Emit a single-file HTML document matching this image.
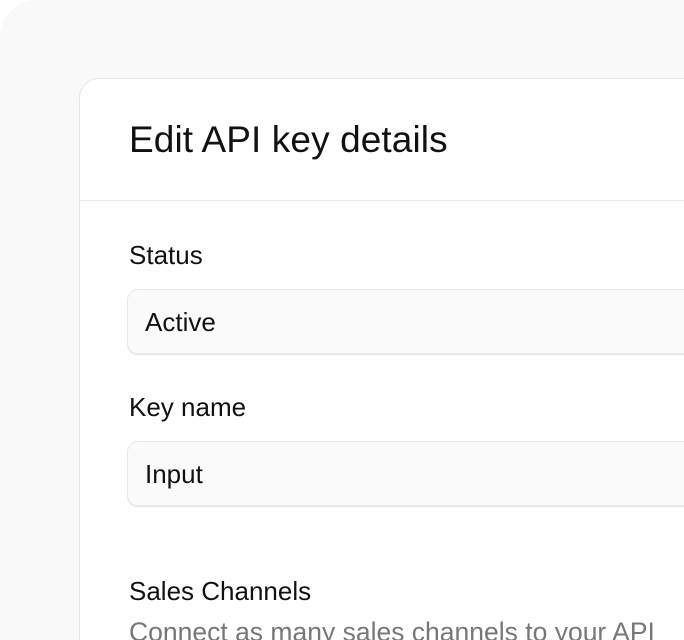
<!DOCTYPE html>
<html><head><style>
html,body{margin:0;padding:0;background:#fff;width:684px;height:640px;overflow:hidden;}
body{font-family:"Liberation Sans",sans-serif;}
.wrap{position:relative;width:684px;height:640px;overflow:hidden;}
.outer{position:absolute;left:0;top:0;width:720px;height:700px;background:#f9f9f9;border-radius:38px;}
.card{position:absolute;left:79px;top:78px;width:700px;height:700px;background:#fff;border:1.5px solid #e6e6e6;border-radius:20px;}
.hdr{position:absolute;left:0;right:0;top:0;height:121px;border-bottom:1.5px solid #e6e6e6;}
.t{position:absolute;left:49px;white-space:nowrap;color:#111;}
.title{top:40px;font-size:37px;letter-spacing:0.1px;}
.lbl{font-size:26px;}
.inp{position:absolute;left:47px;width:700px;height:63px;background:#fafafa;border:1.5px solid #e8e8e8;border-radius:11px;box-shadow:0 1.5px 1px rgba(0,0,0,0.08);}
.inp span{position:absolute;left:17px;top:17px;font-size:26px;color:#111;}
.desc{font-size:26.5px;color:#777;}
</style></head><body>
<div class="wrap">
<div class="outer"></div>
<div class="card">
 <div class="hdr"><div class="t title">Edit API key details</div></div>
 <div class="t lbl" style="top:161px">Status</div>
 <div class="inp" style="top:210px"><span>Active</span></div>
 <div class="t lbl" style="top:313px">Key name</div>
 <div class="inp" style="top:362px"><span>Input</span></div>
 <div class="t lbl" style="top:497px">Sales Channels</div>
 <div class="t desc" style="top:538px">Connect as many sales channels to your API</div>
</div>
</div>
</body></html>
